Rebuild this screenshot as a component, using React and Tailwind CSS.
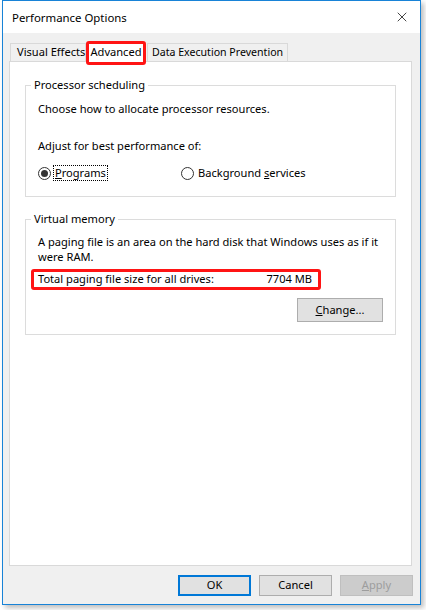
import { X } from "lucide-react";

const font = "font-['Noto_Sans',sans-serif]";

const Radio = ({ checked, focused, children }) => (
  <label className="flex items-center gap-[2px]">
    <span className="grid h-[13px] w-[13px] place-items-center rounded-full border border-[#333333] bg-white">
      {checked ? <span className="h-[7px] w-[7px] rounded-full bg-[#333333]" /> : null}
    </span>
    <span className={focused ? "border border-dotted border-black px-px leading-[14px]" : "border border-transparent px-px leading-[14px]"}>
      {children}
    </span>
  </label>
);

const Group = ({ title, className = "", innerClassName, children }) => (
  <fieldset className={`border border-[#dcdcdc] ${className}`}>
    <legend className="ml-[5px] px-[3px] leading-[16px]">{title}</legend>
    <div className={innerClassName}>{children}</div>
  </fieldset>
);

const Button = ({ className, children }) => (
  <button className={`grid place-items-center border ${className}`}>{children}</button>
);

export default function App() {
  return (
    <div className={`h-[610px] w-[426px] whitespace-nowrap bg-white text-[11.1px] text-black ${font}`}>
      <div className="ml-[2px] flex h-[605px] w-[419px] flex-col border border-[#1883d7] bg-[#f0f0f0] shadow-[3px_3px_5px_rgba(0,0,0,0.25)]">
        {/* title bar */}
        <div className="flex h-[32px] items-center justify-between bg-white pl-[9px] pr-[8px]">
          <span className="pt-px text-[11.4px]">Performance Options</span>
          <X className="mr-[2px] h-[16px] w-[16px]" strokeWidth={1.1} />
        </div>

        <div className="flex flex-1 flex-col px-[6px] pt-[8px]">
          {/* tabs */}
          <div className="flex h-[20px] items-end pl-px">
            <div className="flex h-[18px] w-[76px] items-center border border-b-0 border-[#d9d9d9] bg-[#f0f0f0] pl-[6px]">Visual Effects</div>
            <div className="relative z-10 -mb-[4px] flex h-[24px] w-[60px] items-start justify-center rounded-[3px] border-[3px] border-[#ff1414] bg-white">Advanced</div>
            <div className="ml-px flex h-[18px] items-center border border-b-0 border-[#d9d9d9] bg-[#f0f0f0] px-[4px] text-[10.6px]">Data Execution Prevention</div>
          </div>

          {/* panel */}
          <div className="flex h-[505px] w-[403px] flex-col border border-[#d9d9d9] bg-white px-[15px] pt-[15px]">
            <Group title="Processor scheduling" innerClassName="px-[12px] pb-[15px]">
              <div className="mt-[8px] leading-[15px]">Choose how to allocate processor resources.</div>
              <div className="mt-[22px] leading-[15px]">Adjust for best performance of:</div>
              <div className="mt-[12px] flex h-[16px] items-center">
                <div className="w-[143px]">
                  <Radio checked focused>
                    <span className="underline">P</span>rograms
                  </Radio>
                </div>
                <Radio>
                  Background <span className="underline">s</span>ervices
                </Radio>
              </div>
            </Group>

            <Group title="Virtual memory" className="mt-[14px]" innerClassName="px-[5px] pb-[12px] pt-[7px]">
              <div className="whitespace-normal px-[7px] leading-[15px]">
                A paging file is an area on the hard disk that Windows uses as if it were RAM.
              </div>
              <div className="mt-[5px] flex h-[21px] w-[290px] items-center justify-between rounded-[3px] border-[3px] border-[#ff1414] pl-[4px] pr-[6px]">
                <span>Total paging file size for all drives:</span>
                <span>7704 MB</span>
              </div>
              <div className="mt-[8px] flex justify-end pr-[7px]">
                <Button className="h-[24px] w-[86px] border-[#adadad] bg-[#e1e1e1]">
                  <span>
                    <span className="underline">C</span>hange...
                  </span>
                </Button>
              </div>
            </Group>
          </div>

          {/* dialog buttons */}
          <div className="mt-[9px] flex justify-end gap-[8px] pr-px">
            <Button className="h-[21px] w-[73px] border-2 border-[#0078d7] bg-[#e1e1e1]">OK</Button>
            <Button className="h-[21px] w-[73px] border-[#adadad] bg-[#e1e1e1]">Cancel</Button>
            <Button className="h-[21px] w-[73px] border-[#bfbfbf] bg-[#cccccc] text-[#9d9d9d]">
              <span>
                <span className="underline">A</span>pply
              </span>
            </Button>
          </div>
        </div>
      </div>
    </div>
  );
}
